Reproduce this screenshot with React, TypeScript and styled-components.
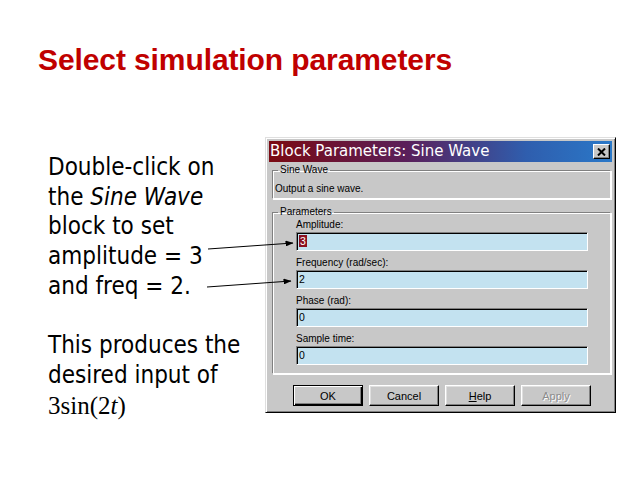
import React from "react";
import styled, { createGlobalStyle } from "styled-components";

const Global = createGlobalStyle`
  html, body { margin: 0; padding: 0; background: #ffffff; }
  * { box-sizing: border-box; }
`;

const Slide = styled.div`
  position: relative;
  width: 638px;
  height: 478px;
  overflow: hidden;
  background: #ffffff;
  padding-top: 43px;
`;

const Title = styled.h1`
  margin: 0 0 0 38px;
  font-family: "Liberation Sans", Arial, sans-serif;
  font-weight: 700;
  font-size: 30px;
  line-height: 34px;
  letter-spacing: -0.1px;
  color: #c00000;
`;

const Row = styled.div`
  display: flex;
  align-items: flex-start;
  margin-top: 60px;
`;

const Bullet = styled.p`
  flex: 0 0 217px;
  margin: 16px 0 0 48px;
  font-family: "DejaVu Sans Condensed", "DejaVu Sans", sans-serif;
  font-stretch: condensed;
  font-size: 24px;
  line-height: 29.7px;
  color: #000;
`;

const Math = styled.span`
  font-family: "Liberation Serif", "Times New Roman", serif;
  font-size: 25px;
  font-stretch: normal;
`;

const Dialog = styled.div`
  width: 351px;
  background: #c8c8c8;
  border: 1px solid;
  border-color: #dfdfdf #000000 #000000 #dfdfdf;
  box-shadow: inset 1px 1px #ffffff, inset -1px -1px #808080;
  padding: 3px;
  font-family: "Liberation Sans", Arial, sans-serif;
  font-size: 10px;
  color: #000;
`;

const TitleBar = styled.div`
  height: 21px;
  display: flex;
  align-items: center;
  justify-content: space-between;
  padding: 0 2px 0 1px;
  background: linear-gradient(to right, #7a0a12 0%, #5a1f5a 40%, #2f5eae 75%, #2a78c8 100%);
`;

const TitleText = styled.span`
  font-family: "DejaVu Sans", Verdana, sans-serif;
  font-size: 15px;
  line-height: 21px;
  color: #ffffff;
  white-space: nowrap;
`;

const CloseButton = styled.div`
  width: 17px;
  height: 15px;
  display: flex;
  align-items: center;
  justify-content: center;
  background: #c8c8c8;
  border: 1px solid;
  border-color: #ffffff #000000 #000000 #ffffff;
  box-shadow: inset -1px -1px #808080;
`;

const Body = styled.div`
  padding: 0 1px 3px 3px;
`;

const Group = styled.fieldset<{ $top: number; $padTop: number; $padBottom: number; $indent: number }>`
  margin: ${(p) => p.$top}px 0 0 0;
  min-width: 0;
  border: 1px solid;
  border-color: #808080 #ffffff #ffffff #808080;
  padding: ${(p) => p.$padTop}px 22px ${(p) => p.$padBottom}px ${(p) => p.$indent}px;
  box-shadow: 1px 1px 0 #ffffff, inset 1px 1px 0 #ffffff;
`;

const Legend = styled.legend<{ $shift?: number }>`
  margin-left: ${(p) => p.$shift ?? 2}px;
  padding: 0 2px;
  font-size: 10px;
  line-height: 12px;
`;

const Description = styled.div`
  line-height: 12px;
  margin-left: -1px;
`;

const Fields = styled.div`
  display: flex;
  flex-direction: column;
  gap: 5px;
`;

const Field = styled.div`
  display: flex;
  flex-direction: column;
`;

const Label = styled.div`
  line-height: 14px;
  height: 14px;
`;

const TextBox = styled.div`
  height: 19px;
  background: #c3e2f0;
  border: 1px solid;
  border-color: #808080 #ffffff #ffffff #808080;
  box-shadow: inset 1px 1px #000000;
  padding: 1px 0 0 2px;
  line-height: 15px;
  font-size: 10.5px;
`;

const Selected = styled.span`
  background: #8a1020;
  color: #ffffff;
  padding: 0 1px;
`;

const ButtonRow = styled.div`
  display: flex;
  gap: 6px;
  margin: 11px 0 0 21px;
`;

const Button = styled.div<{ $default?: boolean; $disabled?: boolean }>`
  width: 70px;
  height: 21px;
  display: flex;
  align-items: center;
  justify-content: center;
  font-size: 11px;
  background: #c8c8c8;
  border: 1px solid;
  border-color: ${(p) => (p.$default ? "#000000" : "#ffffff #000000 #000000 #ffffff")};
  box-shadow: ${(p) =>
    p.$default
      ? "inset 1px 1px #ffffff, inset -1px -1px #000000, inset -2px -2px #808080"
      : "inset -1px -1px #808080, inset 1px 1px #dfdfdf"};
  color: ${(p) => (p.$disabled ? "#8c8c8c" : "#000000")};
  text-shadow: ${(p) => (p.$disabled ? "1px 1px 0 #ffffff" : "none")};
`;

const Arrows = styled.svg`
  position: absolute;
  left: 0;
  top: 0;
  pointer-events: none;
`;

export default function App() {
  return (
    <>
      <Global />
      <Slide>
        <Title>Select simulation parameters</Title>
        <Row>
          <Bullet>
            Double-click on
            <br />
            the <i>Sine Wave</i>
            <br />
            block to set
            <br />
            amplitude = 3
            <br />
            and freq = 2.
            <br />
            <br />
            This produces the
            <br />
            desired input of
            <br />
            <Math>
              3sin(2<i>t</i>)
            </Math>
          </Bullet>
          <Dialog>
            <TitleBar>
              <TitleText>Block Parameters: Sine Wave</TitleText>
              <CloseButton>
                <svg width="9" height="8" viewBox="0 0 9 8">
                  <path d="M1 0.5 L8 7.5 M8 0.5 L1 7.5" stroke="#000" strokeWidth="2" />
                </svg>
              </CloseButton>
            </TitleBar>
            <Body>
              <Group $top={2} $padTop={7} $padBottom={3} $indent={3}>
                <Legend>Sine Wave</Legend>
                <Description>Output a sine wave.</Description>
              </Group>
              <Group $top={7} $padTop={0} $padBottom={8} $indent={23}>
                <Legend $shift={-18}>Parameters</Legend>
                <Fields>
                  <Field>
                    <Label>Amplitude:</Label>
                    <TextBox>
                      <Selected>3</Selected>
                    </TextBox>
                  </Field>
                  <Field>
                    <Label>Frequency (rad/sec):</Label>
                    <TextBox>2</TextBox>
                  </Field>
                  <Field>
                    <Label>Phase (rad):</Label>
                    <TextBox>0</TextBox>
                  </Field>
                  <Field>
                    <Label>Sample time:</Label>
                    <TextBox>0</TextBox>
                  </Field>
                </Fields>
              </Group>
              <ButtonRow>
                <Button $default>OK</Button>
                <Button>Cancel</Button>
                <Button>
                  <u>H</u>elp
                </Button>
                <Button $disabled>Apply</Button>
              </ButtonRow>
            </Body>
          </Dialog>
        </Row>
        <Arrows width="638" height="478" viewBox="0 0 638 478">
          <defs>
            <marker id="head" markerWidth="8" markerHeight="6" refX="7.5" refY="3" orient="auto" markerUnits="userSpaceOnUse">
              <path d="M0 0 L8 3 L0 6 Z" fill="#000" />
            </marker>
          </defs>
          <line x1="208" y1="249" x2="293" y2="243" stroke="#000" strokeWidth="1" markerEnd="url(#head)" />
          <line x1="207" y1="287" x2="291" y2="281" stroke="#000" strokeWidth="1" markerEnd="url(#head)" />
        </Arrows>
      </Slide>
    </>
  );
}
